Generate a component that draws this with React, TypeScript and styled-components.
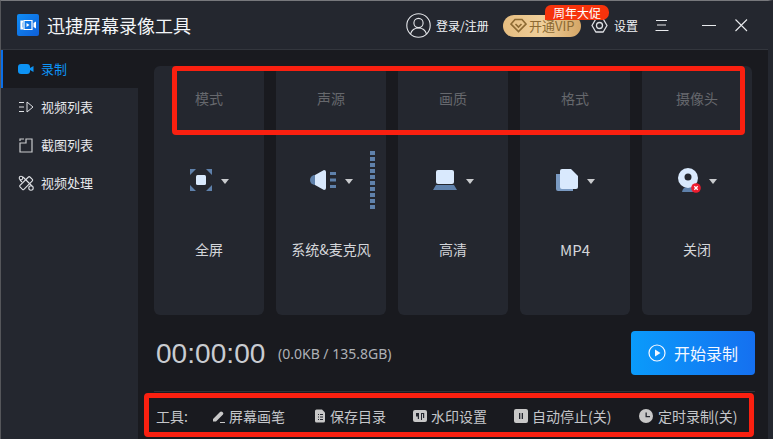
import React from "react";
import styled, { createGlobalStyle } from "styled-components";

const Global = createGlobalStyle`
  html, body { margin: 0; padding: 0; background: #191a1f; }
  #root { width: 773px; height: 439px; overflow: hidden; }
  * { box-sizing: border-box; }
`;
const FONT = `"Noto Sans CJK SC", "Noto Sans", sans-serif`;

const Windowed = styled.div`
  position: relative;
  width: 773px;
  height: 439px;
  display: flex;
  flex-direction: column;
  background: #191a1f;
  border-top: 1px solid #77787c;
  border-left: 1px solid #55565a;
  border-right: 5px solid #24272f;
  font-family: ${FONT};
  overflow: hidden;
`;
const TitleBar = styled.header`
  height: 49px;
  flex: none;
  display: flex;
  align-items: center;
  background: #24272f;
  border-bottom: 1px solid #33363d;
  padding-left: 16px;
  margin-right: -5px;
`;
const Logo = styled.svg`
  width: 22px;
  height: 22px;
  margin-right: 8px;
`;
const AppName = styled.div`
  font-size: 18px;
  color: #f3f5f8;
  letter-spacing: 0;
  width: 359px;
`;
const Login = styled.div`
  display: flex;
  align-items: center;
  gap: 5px;
  font-size: 12px;
  color: #f0f2f5;
  width: 97px;
  svg { width: 25px; height: 25px; }
`;
const Vip = styled.div`
  position: relative;
  width: 78px;
  height: 22px;
  border-radius: 11px;
  background: linear-gradient(90deg, #e6bd80, #efcf9b 50%, #d5a666);
  display: flex;
  align-items: center;
  gap: 2px;
  padding-left: 7px;
  color: #8d6a33;
  font-size: 13px;
  line-height: 22px;
  margin-top: 1px;
  svg { width: 17px; height: 15px; flex: none; }
`;
const Badge = styled.div`
  position: absolute;
  left: 42px;
  top: -10px;
  width: 64px;
  height: 15px;
  background: #f6330c;
  border-radius: 6px 7px 7px 0;
  color: #fff;
  font-size: 12px;
  line-height: 15px;
  text-align: center;
`;
const Settings = styled.div`
  display: flex;
  align-items: center;
  gap: 6px;
  margin-left: 10px;
  font-size: 12px;
  color: #f0f2f5;
  width: 64px;
  svg { width: 17px; height: 17px; flex: none; }
`;
const HeadIcon = styled.svg`
  width: 14px;
  height: 14px;
  flex: none;
`;
const MenuSlot = styled.div`
  width: 47px;
  display: flex;
`;
const MinSlot = styled.div`
  width: 33px;
  display: flex;
`;
const Body = styled.div`
  flex: 1;
  display: flex;
  min-height: 0;
`;
const Sidebar = styled.nav`
  width: 137px;
  flex: none;
  background: #24272f;
  display: flex;
  flex-direction: column;
`;
const NavItem = styled.div<{ $active?: boolean }>`
  height: 38px;
  display: flex;
  align-items: center;
  gap: 6px;
  padding-left: ${(p) => (p.$active ? 14 : 16)}px;
  padding-bottom: 1px;
  font-size: 13px;
  color: ${(p) => (p.$active ? "#0d93f5" : "#e6e8ec")};
  background: ${(p) => (p.$active ? "#191a1f" : "transparent")};
  border-left: ${(p) => (p.$active ? "2px solid #0a6fe8" : "none")};
  svg { width: 18px; height: 18px; flex: none; }
`;
const Main = styled.main`
  flex: 1;
  min-width: 0;
  display: flex;
  flex-direction: column;
  padding: 16px 13px 0 16px;
`;
const Cards = styled.div`
  display: flex;
  gap: 12px;
  height: 249px;
  flex: none;
`;
const Card = styled.section`
  position: relative;
  width: 110px;
  flex: none;
  background: #24272f;
  border-radius: 6px;
  display: flex;
  flex-direction: column;
  align-items: center;
`;
const CardTitle = styled.div`
  margin-top: 22px;
  height: 20px;
  font-size: 14px;
  line-height: 20px;
  color: #66686d;
`;
const Picker = styled.div`
  margin-top: 60px;
  height: 24px;
  display: flex;
  align-items: center;
  gap: 8px;
  svg.main { width: 24px; height: 24px; flex: none; }
`;
const Caret = styled.span`
  width: 0;
  height: 0;
  border-left: 4px solid transparent;
  border-right: 4px solid transparent;
  border-top: 5px solid #c9cbce;
  margin-top: 2px;
`;
const CardValue = styled.div<{ $low?: boolean }>`
  margin-top: ${(p) => (p.$low ? 48 : 47)}px;
  height: 20px;
  font-size: ${(p) => (p.$low ? 15 : 14)}px;
  line-height: 20px;
  color: #d4d6da;
`;
const Level = styled.div`
  position: absolute;
  left: 94px;
  top: 85px;
  display: flex;
  flex-direction: column;
  gap: 2px;
`;
const LevelDot = styled.i`
  display: block;
  width: 5px;
  height: 4px;
  background: #5f81ab;
`;
const StatusRow = styled.div`
  height: 77px;
  flex: none;
  display: flex;
  align-items: center;
  padding-left: 2px;
  border-bottom: 1px solid #303238;
`;
const Timer = styled.div`
  font-family: "Liberation Sans", Arial, sans-serif;
  font-size: 28px;
  color: #c9ccd1;
  width: 122px;
  letter-spacing: 0.05px;
  padding-top: 2px;
`;
const Size = styled.div`
  font-size: 14px;
  color: #aeb1b6;
  flex: 1;
  font-family: "Noto Sans", sans-serif;
  padding-top: 1px;
`;
const StartButton = styled.button`
  width: 124px;
  height: 44px;
  border: 0;
  border-radius: 4px;
  background: linear-gradient(90deg, #0a9bfb, #1570f0);
  color: #f4f8ff;
  display: flex;
  align-items: center;
  justify-content: center;
  gap: 8px;
  font-family: ${FONT};
  font-size: 16px;
  padding: 0;
  svg { width: 18px; height: 18px; }
`;
const ToolBar = styled.div`
  flex: 1;
  display: flex;
  align-items: center;
  font-size: 14px;
  color: #c4c6ca;
  padding: 1px 0 0 2px;
`;
const ToolLabel = styled.span`
  width: 56px;
  flex: none;
`;
const Tool = styled.span<{ $w: number; $gap?: number }>`
  width: ${(p) => p.$w}px;
  flex: none;
  display: flex;
  align-items: center;
  gap: ${(p) => p.$gap ?? 3}px;
  white-space: nowrap;
  svg { width: 14px; height: 14px; flex: none; }
`;
const Annotation = styled.div<{ $x: number; $y: number; $w: number; $h: number }>`
  position: absolute;
  left: ${(p) => p.$x}px;
  top: ${(p) => p.$y}px;
  width: ${(p) => p.$w}px;
  height: ${(p) => p.$h}px;
  border: 5px solid #fa2010;
  border-radius: 4px;
  pointer-events: none;
`;

const ICON_LIGHT = "#d9e9fd";
const ICON_DARK = "#5f81ab";

export default function App() {
  return (
    <Windowed>
      <Global />
      <TitleBar>
        <Logo viewBox="0 0 22 22">
          <defs>
            <linearGradient id="lg" x1="0" y1="0" x2="1" y2="1">
              <stop offset="0" stopColor="#0f8df5" />
              <stop offset="1" stopColor="#0f5fd8" />
            </linearGradient>
          </defs>
          <rect width="22" height="22" rx="2" fill="url(#lg)" />
          <path d="M4 7h1.500v1H5v6h.5v1H4zM7 6.500h8v9H7z" fill="none" stroke="#fff" strokeWidth="1.2" />
          <path d="M9.500 9l3 2-3 2z" fill="#fff" />
          <path d="M16.500 9l2.500-1.500v7L16.500 13z" fill="#fff" />
        </Logo>
        <AppName>迅捷屏幕录像工具</AppName>
        <Login>
          <svg viewBox="0 0 25 25" fill="none" stroke="#e4e6ea" strokeWidth="1.1">
            <circle cx="12.5" cy="12.5" r="11.7" />
            <circle cx="12.5" cy="10" r="4.6" />
            <path d="M4.500 21c1.200-4 4.400-6 8-6s6.800 2 8 6" />
          </svg>
          登录/注册
        </Login>
        <Vip>
          <svg viewBox="0 0 17 15" fill="none" stroke="#8d6a33" strokeWidth="1.6">
            <path d="M5 1.500h7l4 4.500-7.500 7.500L1 6z" />
            <path d="M5.500 6l3 3 3-3" />
          </svg>
          开通VIP
          <Badge>周年大促</Badge>
        </Vip>
        <Settings>
          <svg viewBox="0 0 17 17" fill="none" stroke="#dfe1e5" strokeWidth="1.3">
            <path d="M1 8.500L4.800 2h7.400L16 8.500 12.200 15H4.800z" strokeLinejoin="round" />
            <circle cx="8.500" cy="8.500" r="3" />
          </svg>
          设置
        </Settings>
        <MenuSlot>
          <HeadIcon viewBox="0 0 14 14" stroke="#e8eaed" strokeWidth="1">
            <path d="M1 2.500h11M2 7h9M0.500 12.500h13" />
          </HeadIcon>
        </MenuSlot>
        <MinSlot>
          <HeadIcon viewBox="0 0 14 14" stroke="#e8eaed" strokeWidth="1">
            <path d="M0 7.500h14" />
          </HeadIcon>
        </MinSlot>
        <HeadIcon viewBox="0 0 14 14" stroke="#e8eaed" strokeWidth="1.1">
          <path d="M0.500 1.500l11.500 11.500M12 1.500L0.500 13" />
        </HeadIcon>
      </TitleBar>
      <Body>
        <Sidebar>
          <NavItem $active>
            <svg viewBox="0 0 18 18">
              <rect x="1" y="4" width="12" height="10" rx="3" fill="#0d93f5" />
              <path d="M13 8l3.500-2v6L13 10z" fill="#0d93f5" />
            </svg>
            录制
          </NavItem>
          <NavItem>
            <svg viewBox="0 0 18 18" fill="none" stroke="#dfe1e5" strokeWidth="1">
              <path d="M2 4.500h5M2 9h5M2 13.500h5M10 4l6 5-6 5z" />
            </svg>
            视频列表
          </NavItem>
          <NavItem>
            <svg viewBox="0 0 18 18" fill="none" stroke="#c9cbce" strokeWidth="1.2">
              <path d="M3 7v9h12V3H9v4zM3 5V3h4" />
            </svg>
            截图列表
          </NavItem>
          <NavItem>
            <svg viewBox="0 0 18 18" fill="none" stroke="#dfe1e5" strokeWidth="1.1">
              <rect x="2" y="6.500" width="14" height="5.500" rx="1" transform="rotate(-45 9 9)" />
              <path d="M6 3l9 9M3 6l2 2" />
              <circle cx="14" cy="14" r="2.200" />
              <circle cx="4" cy="4" r="1.800" />
            </svg>
            视频处理
          </NavItem>
        </Sidebar>
        <Main>
          <Cards>
            <Card>
              <CardTitle>模式</CardTitle>
              <Picker>
                <svg className="main" viewBox="0 0 24 24">
                  <path d="M1 7V1h6zM17 1h6v6zM23 17v6h-6zM7 23H1v-6z" fill={ICON_DARK} />
                  <rect x="7" y="7" width="10" height="10" rx="1.500" fill={ICON_LIGHT} />
                </svg>
                <Caret />
              </Picker>
              <CardValue>全屏</CardValue>
            </Card>
            <Card>
              <CardTitle>声源</CardTitle>
              <Picker>
                <svg className="main" viewBox="0 0 28 24" style={{ width: 28 }}>
                  <path d="M6 7v10a5 5 0 0 1 0-10z" fill={ICON_DARK} />
                  <path d="M6 7l9-5q2 0 2 2v16q0 2-2 2l-9-5z" fill={ICON_LIGHT} />
                  <path d="M21 4h6v3h-6zM21 10.500h6v3h-6zM21 17h6v3h-6z" fill={ICON_DARK} />
                </svg>
                <Caret />
              </Picker>
              <CardValue>系统&amp;麦克风</CardValue>
              <Level>
                {Array.from({ length: 10 }).map((_, i) => (
                  <LevelDot key={i} />
                ))}
              </Level>
            </Card>
            <Card>
              <CardTitle>画质</CardTitle>
              <Picker>
                <svg className="main" viewBox="0 0 26 24" style={{ width: 26 }}>
                  <rect x="4" y="2" width="18" height="14" rx="2" fill={ICON_LIGHT} />
                  <path d="M4 17h18l3 5H1z" fill={ICON_DARK} />
                </svg>
                <Caret />
              </Picker>
              <CardValue>高清</CardValue>
            </Card>
            <Card>
              <CardTitle>格式</CardTitle>
              <Picker>
                <svg className="main" viewBox="0 0 24 24">
                  <path d="M1 6h17v17H3q-2 0-2-2z" fill="#7a9ac2" />
                  <path d="M5 3q0-2 2-2h9l7 7v11q0 2-2 2H7q-2 0-2-2z" fill={ICON_LIGHT} />
                </svg>
                <Caret />
              </Picker>
              <CardValue $low>MP4</CardValue>
            </Card>
            <Card>
              <CardTitle>摄像头</CardTitle>
              <Picker>
                <svg className="main" viewBox="0 0 24 26" style={{ height: 26 }}>
                  <path d="M5 25q1-5 5-5h6v5z" fill={ICON_DARK} />
                  <circle cx="11" cy="11" r="10" fill={ICON_LIGHT} />
                  <circle cx="11" cy="10" r="3.500" fill="#24272f" />
                  <circle cx="19" cy="21" r="4.800" fill="#ee1c2e" />
                  <path d="M17.300 19.300l3.400 3.400M20.700 19.300l-3.400 3.400" stroke="#fff" strokeWidth="1.300" />
                </svg>
                <Caret />
              </Picker>
              <CardValue>关闭</CardValue>
            </Card>
          </Cards>
          <StatusRow>
            <Timer>00:00:00</Timer>
            <Size>(0.0KB / 135.8GB)</Size>
            <StartButton>
              <svg viewBox="0 0 18 18">
                <circle cx="9" cy="9" r="8" fill="none" stroke="#f4f8ff" strokeWidth="1.200" />
                <path d="M7 5.500l5.500 3.500L7 12.500z" fill="#f4f8ff" />
              </svg>
              开始录制
            </StartButton>
          </StatusRow>
          <ToolBar>
            <ToolLabel>工具:</ToolLabel>
            <Tool $w={101}>
              <svg viewBox="0 0 14 14">
                <path d="M1 10l7-7q1-1 2.500 0t.5 2.500l-7 7H1zM8 13h5v1H8z" fill="#c8c8c8" />
              </svg>
              屏幕画笔
            </Tool>
            <Tool $w={100}>
              <svg viewBox="0 0 14 14">
                <path d="M2 2q0-1.500 1.500-1.500H9l3 3V12q0 1.500-1.500 1.500h-7Q2 13.500 2 12z" fill="#c8c8c8" />
                <path d="M5 5h1v1H5zM7 5h3v1H7zM5 7.500h1v1H5zM7 7.500h3v1H7zM5 10h1v1H5zM7 10h3v1H7z" fill="#24272f" />
              </svg>
              保存目录
            </Tool>
            <Tool $w={101} $gap={4}>
              <svg viewBox="0 0 14 14">
                <rect y="1" width="14" height="12" rx="2" fill="#c8c8c8" />
                <path d="M3 4h3v6H4.800V7.500H3zM8 4h3.200v5H10V5H9v6H8z" fill="#24272f" />
              </svg>
              水印设置
            </Tool>
            <Tool $w={125} $gap={4}>
              <svg viewBox="0 0 14 14">
                <rect width="14" height="14" rx="2" fill="#c8c8c8" />
                <path d="M5 4h1.300v6H5zM7.700 4H9v6H7.700z" fill="#24272f" />
              </svg>
              自动停止(关)
            </Tool>
            <Tool $w={100} $gap={5}>
              <svg viewBox="0 0 14 14">
                <circle cx="7" cy="7" r="7" fill="#c8c8c8" />
                <path d="M6.500 3.500h1.300V7H11v1.300H6.500z" fill="#24272f" />
              </svg>
              定时录制(关)
            </Tool>
          </ToolBar>
        </Main>
      </Body>
      <Annotation $x={171} $y={65} $w={573} $h={69} />
      <Annotation $x={143} $y={392} $w={610} $h={44} />
    </Windowed>
  );
}
